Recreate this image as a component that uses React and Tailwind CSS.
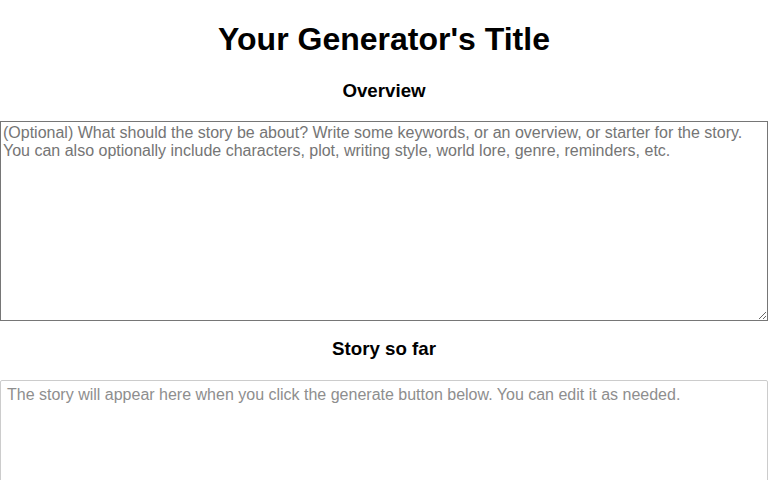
export default function App() {
  return (
    <div className="bg-white text-black font-['Liberation_Sans',Arial,sans-serif]">
      <h1 className="pt-[21px] text-center text-[32px] leading-[37px] font-bold">Your Generator's Title</h1>

      <h3 className="mt-[22px] text-center text-[18.72px] leading-[22px] font-bold">Overview</h3>
      <textarea
        className="mt-[19px] block w-full h-[200px] border border-[#767676] p-[2px] text-[16px] leading-[18px] placeholder:text-[#757575] outline-none resize-y"
        placeholder="(Optional) What should the story be about? Write some keywords, or an overview, or starter for the story. You can also optionally include characters, plot, writing style, world lore, genre, reminders, etc."
      />

      <h3 className="mt-[17px] text-center text-[18.72px] leading-[22px] font-bold">Story so far</h3>
      <textarea
        className="mt-[20px] block w-full h-[300px] border border-[#cccccc] rounded-[2px] px-[6px] py-[5px] text-[16px] leading-[18px] placeholder:text-[#8e8e8e] outline-none resize-y"
        placeholder="The story will appear here when you click the generate button below. You can edit it as needed."
      />
    </div>
  );
}
